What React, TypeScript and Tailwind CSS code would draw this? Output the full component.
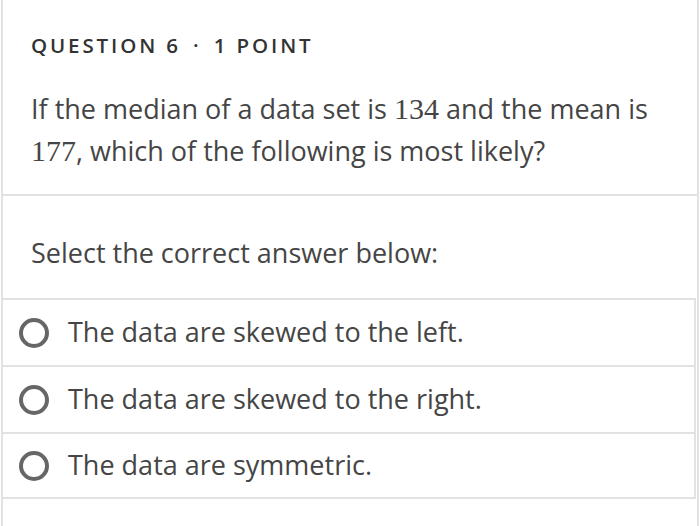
const options = [
  "The data are skewed to the left.",
  "The data are skewed to the right.",
  "The data are symmetric.",
];

const Num = ({ children }: { children: React.ReactNode }) => (
  <span className="font-['Liberation_Serif',serif] text-[30px]">{children}</span>
);

export default function App() {
  return (
    <div className="h-[526px] w-[700px] overflow-hidden bg-white font-['Open_Sans',sans-serif] text-[#454545]">
      <div className="mx-[1px] h-full border-x-2 border-[#e2e2e2]">
        <div className="border-b-2 border-[#e2e2e2] px-7 pt-[31px] pb-[22px]">
          <div className="text-[20.5px] font-semibold tracking-[0.14em] leading-7 text-[#333]">
            QUESTION 6 <span className="mx-[4px]">·</span> 1 POINT
          </div>
          <p className="mt-[29px] text-[27px] leading-[42px]">
            If the median of a data set is <Num>134</Num> and the mean is{" "}
            <Num>177</Num>, which of the following is most likely?
          </p>
        </div>
        <div className="flex h-[102px] items-center px-7 pt-[12px] text-[27px]">
          Select the correct answer below:
        </div>
        <div className="mr-[1px] border-r-2 border-[#e2e2e2]">
          {options.map((o) => (
            <div
              key={o}
              className="flex h-[67px] items-center gap-[19px] border-t-2 border-[#e2e2e2] pl-4 text-[27px] last:border-b-2"
            >
              <span className="h-[30px] w-[30px] shrink-0 rounded-full border-[4px] border-[#666]" />
              <span>{o}</span>
            </div>
          ))}
        </div>
      </div>
    </div>
  );
}
